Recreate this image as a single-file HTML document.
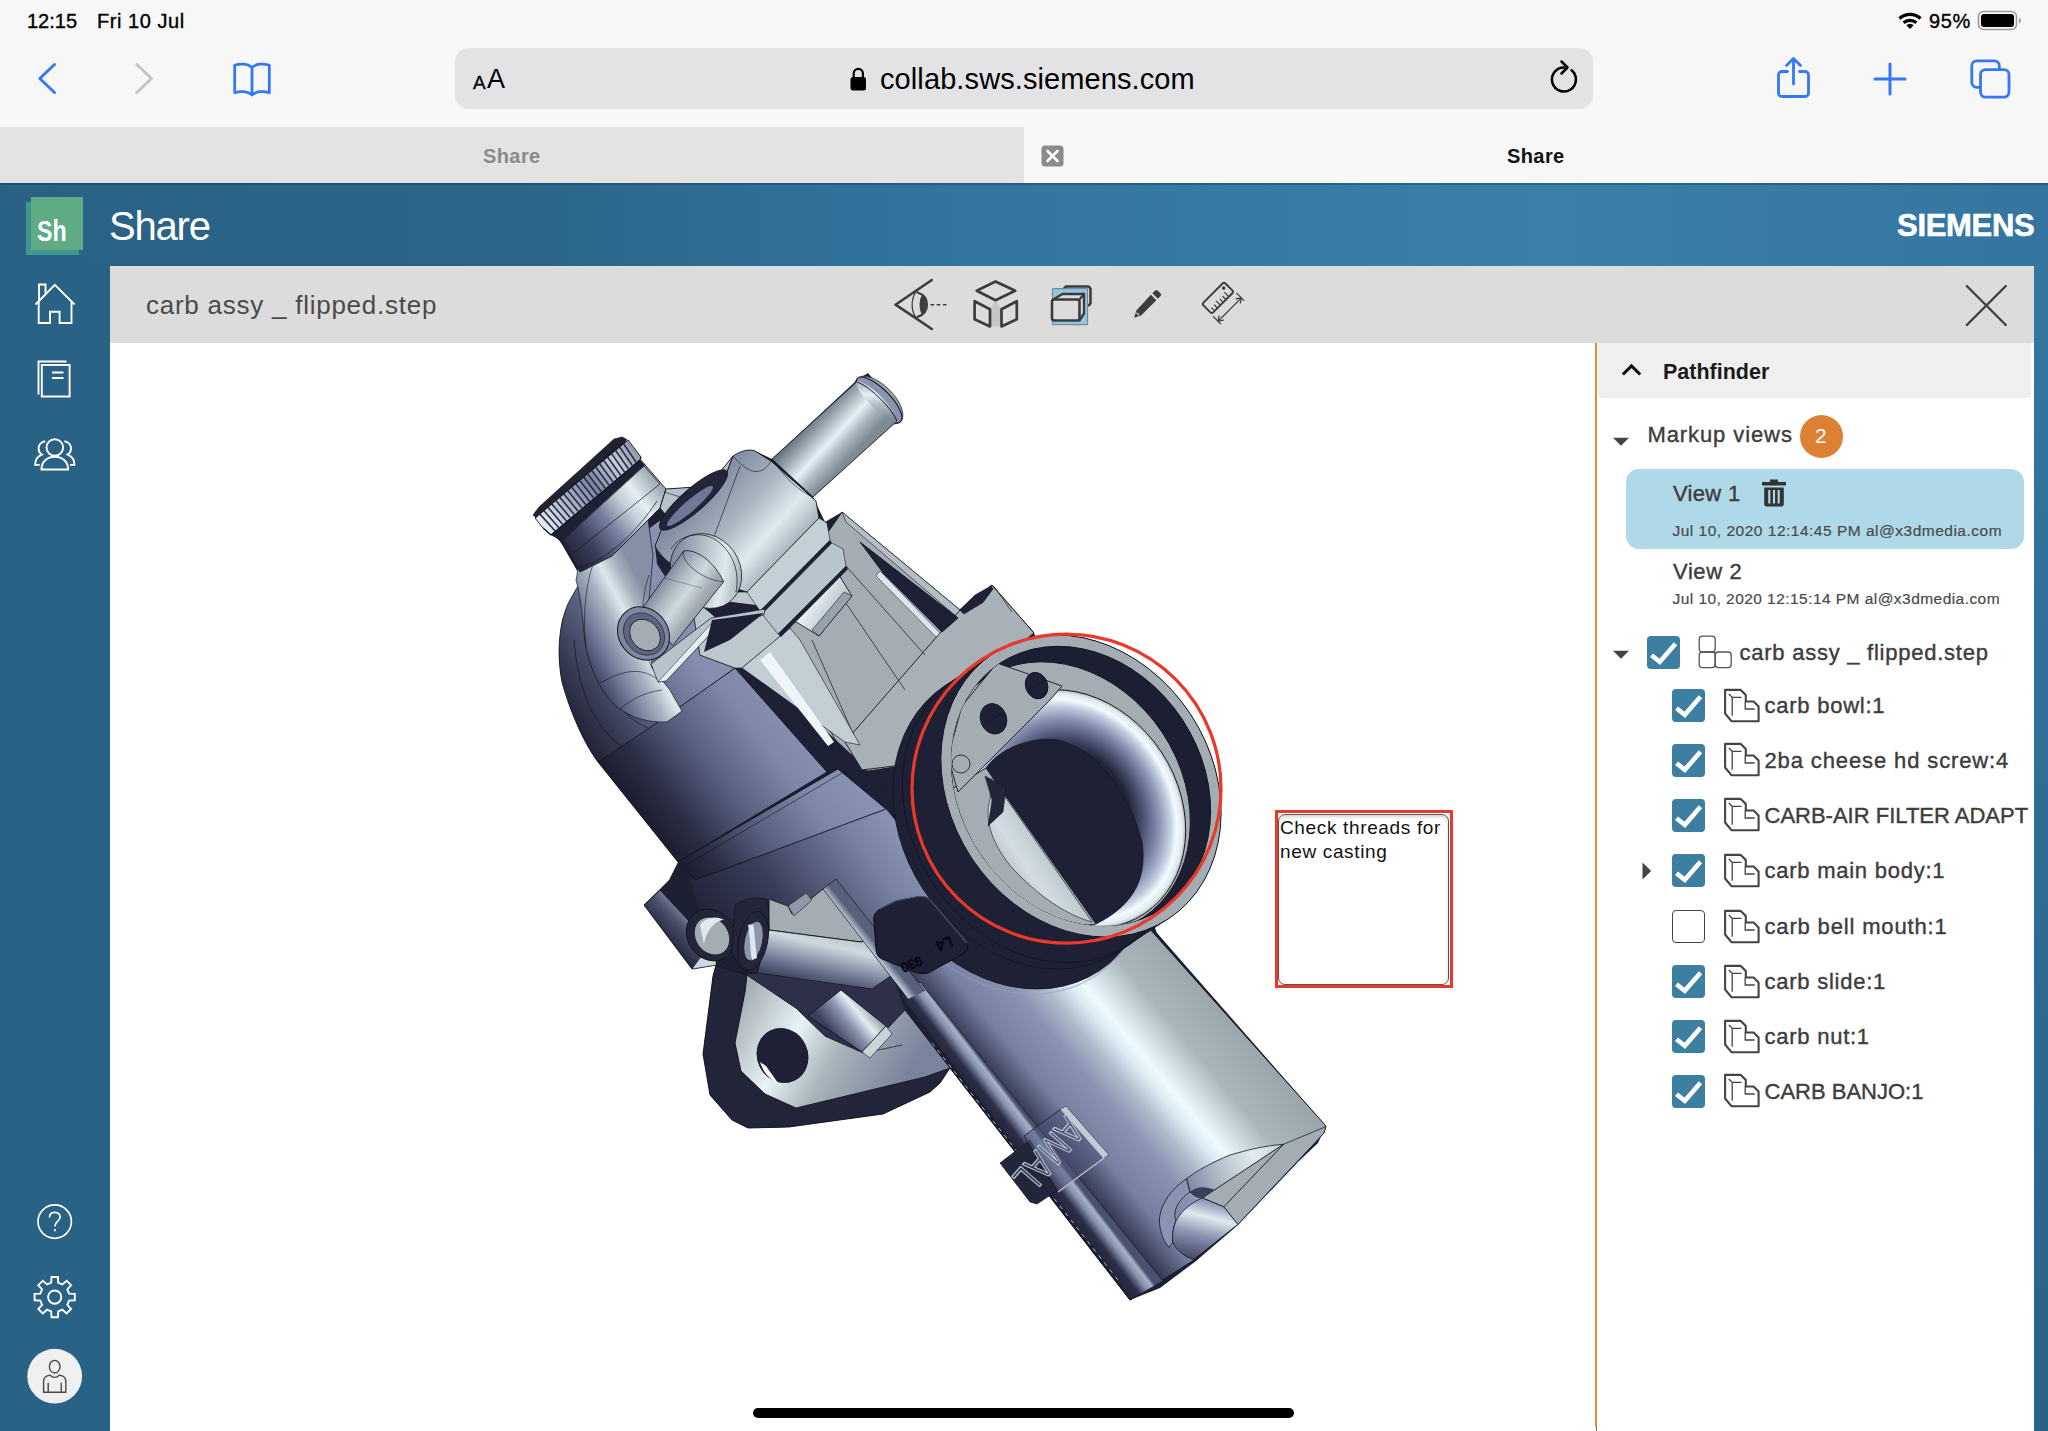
<!DOCTYPE html>
<html lang="en">
<head>
<meta charset="utf-8">
<title>Share</title>
<style>
*{box-sizing:border-box;margin:0;padding:0}
html,body{width:2048px;height:1431px;overflow:hidden;background:#fff}
body{position:relative;font-family:"Liberation Sans",sans-serif;color:#000}
.abs{position:absolute}
.t{position:absolute;white-space:nowrap;line-height:1}
/* safari chrome */
#chrome{left:0;top:0;width:2048px;height:127px;background:#f7f7f7}
#urlbar{left:455px;top:48px;width:1138px;height:61px;border-radius:14px;background:#e3e3e5}
#tabbar{left:0;top:127px;width:2048px;height:57px;background:#f7f7f7}
#tab1{left:0;top:127px;width:1024px;height:56px;background:#e3e3e3}
/* app */
#hdr{left:0;top:183px;width:2048px;height:1248px;background:linear-gradient(90deg,#2a6285 0%,#2b6588 24%,#3377a1 50%,#3a80a9 76%,#3679a3 92%,#33759e 100%)}
#side{left:0;top:265px;width:110px;height:1166px;background:#2a6285}
#rstrip{left:2034px;top:265px;width:14px;height:1166px;background:linear-gradient(180deg,#3377a1,#2a6285)}
#vbar{left:110px;top:266px;width:1924px;height:77px;background:#dcdcdc}
#canvas{left:110px;top:343px;width:1486px;height:1088px;background:#fff}
#panel{left:1597px;top:343px;width:437px;height:1088px;background:#fff}
#oline{left:1595px;top:343px;width:2px;height:1084px;background:#e08b3e}
#pfh{left:1598px;top:343px;width:433px;height:55px;background:#efefef;border-radius:0 0 4px 4px}
.pt{color:#3d3d3d;font-size:22px;letter-spacing:.75px;-webkit-text-stroke:.4px #3d3d3d}
.cb{position:absolute;width:33px;height:33px;border-radius:4px;background:#3d7fa1}
.cb.off{background:#fff;border:1.5px solid #444}
</style>
</head>
<body>
<!-- ===== Safari chrome ===== -->
<div class="abs" id="chrome"></div>
<div class="t" style="left:27px;top:10.5px;font-size:20px;-webkit-text-stroke:.35px #000">12:15</div>
<div class="t" style="left:97px;top:10.5px;font-size:20px;letter-spacing:.55px;-webkit-text-stroke:.35px #000">Fri 10 Jul</div>
<div class="t" style="left:1929px;top:10.5px;font-size:20px;letter-spacing:.6px;-webkit-text-stroke:.35px #000">95%</div>
<div class="abs" id="urlbar"></div>
<svg class="abs" style="left:0;top:0" width="2048" height="184" viewBox="0 0 2048 184" fill="none">
  <!-- wifi -->
  <g id="wifi">
    <path d="M1899.5 18.5a15.5 15.5 0 0 1 21 0" stroke="#000" stroke-width="3.2" stroke-linecap="butt"/>
    <path d="M1903.6 22.8a9.6 9.6 0 0 1 12.8 0" stroke="#000" stroke-width="3.2"/>
    <path d="M1910 29l-3.6-3.7a5 5 0 0 1 7.2 0z" fill="#000"/>
  </g>
  <!-- battery -->
  <rect x="1978.5" y="11.5" width="38" height="18" rx="5" stroke="#9a9a9a" stroke-width="1.6"/>
  <rect x="1981" y="14" width="33" height="13" rx="3" fill="#000"/>
  <path d="M2019 17.5v6a3.3 3.3 0 0 0 0-6z" fill="#9a9a9a"/>
  <!-- back / fwd -->
  <path d="M54.5 64.5L39.8 78.5L54.5 92.5" stroke="#3478f6" stroke-width="3" stroke-linecap="round" stroke-linejoin="round"/>
  <path d="M136.8 64.5L151.5 78.5L136.8 92.5" stroke="#c5c5c7" stroke-width="3" stroke-linecap="round" stroke-linejoin="round"/>
  <!-- book -->
  <path d="M252 67.5c-4-3.5-11-4.5-17.3-2.2v27.5c6.3-2.3 13.3-1.3 17.3 2.2c4-3.500 11-4.500 17.300-2.200v-27.500c-6.300-2.300-13.300-1.300-17.300 2.200zM252 67.500v27.500" stroke="#3478f6" stroke-width="2.8" stroke-linejoin="round"/>
  <!-- lock -->
  <rect x="850.500" y="77" width="15.500" height="13.500" rx="2.500" fill="#000"/>
  <path d="M853.700 78v-4.500a4.600 4.600 0 0 1 9.200 0v4.500" stroke="#000" stroke-width="2.200"/>
  <!-- reload -->
  <path d="M1571.500 70.200a12 12 0 1 1 -7.500 -2.700" stroke="#000" stroke-width="2.500" stroke-linecap="round"/>
  <path d="M1561.500 61.500l6 6l-6 6" stroke="#000" stroke-width="2.500" stroke-linecap="round" stroke-linejoin="round"/>
  <!-- share -->
  <path d="M1787.500 71.500h-5.500a3.500 3.500 0 0 0 -3.500 3.500v18a3.500 3.500 0 0 0 3.500 3.500h23a3.500 3.500 0 0 0 3.500 -3.500v-18a3.500 3.500 0 0 0 -3.500 -3.500h-5.500" stroke="#3478f6" stroke-width="2.800" stroke-linecap="round"/>
  <path d="M1793.500 84v-25M1786.500 65.500l7-7l7 7" stroke="#3478f6" stroke-width="2.800" stroke-linecap="round" stroke-linejoin="round"/>
  <!-- plus -->
  <path d="M1875 79h30M1890 64v30" stroke="#3478f6" stroke-width="3" stroke-linecap="round"/>
  <!-- tabs -->
  <rect x="1971.800" y="60.800" width="27.500" height="26.500" rx="5" stroke="#3478f6" stroke-width="2.800"/>
  <rect x="1980.500" y="69.600" width="28.500" height="27.500" rx="5" fill="#f7f7f7" stroke="#3478f6" stroke-width="2.800"/>
</svg>
<div class="t" style="left:473px;top:73px;font-size:19px;-webkit-text-stroke:.3px #000">A</div>
<div class="t" style="left:487px;top:66px;font-size:27px">A</div>
<div class="t" style="left:880px;top:64.5px;font-size:29px;letter-spacing:.1px">collab.sws.siemens.com</div>
<div class="abs" id="tabbar"></div>
<div class="abs" id="tab1"></div>
<div class="t" style="left:483px;top:146px;font-size:20px;font-weight:bold;color:#8a8a8a;letter-spacing:.4px">Share</div>
<div class="t" style="left:1507px;top:146px;font-size:20px;font-weight:bold;color:#111;letter-spacing:.4px">Share</div>
<svg class="abs" style="left:1041px;top:145px" width="23" height="22" viewBox="0 0 23 22"><rect x=".5" y=".5" width="22" height="21" rx="3.500" fill="#8b8b8b"/><path d="M6.500 6l10 10M16.500 6l-10 10" stroke="#fff" stroke-width="2.600" stroke-linecap="round"/></svg>

<!-- ===== App ===== -->
<div class="abs" id="hdr"></div>
<div class="abs" style="left:0;top:183px;width:2048px;height:2px;background:rgba(20,50,70,.35)"></div>
<div class="abs" id="side"></div>
<div class="abs" id="rstrip"></div>
<!-- logo -->
<div class="abs" style="left:26px;top:202px;width:53px;height:53px;background:#3f9890"></div>
<div class="abs" style="left:31px;top:197px;width:52px;height:53px;background:#5eab84"></div>
<div class="t" style="left:36.5px;top:216.5px;font-size:29px;font-weight:bold;color:#fff;transform:scaleX(.8);transform-origin:0 0">Sh</div>
<div class="t" style="left:109px;top:205.5px;font-size:40px;color:#fff;letter-spacing:-1.200px">Share</div>
<div class="t" style="left:1897px;top:209.5px;font-size:31px;font-weight:bold;color:#fff;letter-spacing:-.3px;-webkit-text-stroke:.6px #fff">SIEMENS</div>

<div class="abs" id="vbar"></div>
<div class="t" style="left:146px;top:291.5px;font-size:26px;color:#4a4a4a;letter-spacing:.75px">carb assy _ flipped.step</div>
<div class="abs" id="canvas"></div>
<div class="abs" id="panel"></div>
<div class="abs" id="oline"></div>
<div class="abs" id="pfh"></div>

<!-- MODEL-START -->
<svg class="abs" style="left:110px;top:343px" width="1486" height="1088" viewBox="110 343 1486 1088">
<defs>
  <!-- main body: across-axis gradient, left(dark) to right(light) -->
  <linearGradient id="gBody" gradientUnits="userSpaceOnUse" x1="928" y1="1040" x2="1117" y2="882">
    <stop offset="0" stop-color="#1d1f33"/><stop offset=".10" stop-color="#30334d"/><stop offset=".24" stop-color="#767f9f"/>
    <stop offset=".40" stop-color="#8a93b2"/><stop offset=".50" stop-color="#aebbcc"/><stop offset=".58" stop-color="#dcebf2"/><stop offset=".63" stop-color="#eefaff"/>
    <stop offset=".70" stop-color="#d2dfe5"/><stop offset=".80" stop-color="#aab6bc"/><stop offset="1" stop-color="#9aa6ac"/>
  </linearGradient>
  <!-- bowl: dark lower-left to blue-grey upper-right -->
  <linearGradient id="gBowl" gradientUnits="userSpaceOnUse" x1="640" y1="815" x2="800" y2="690">
    <stop offset="0" stop-color="#1b1c2e"/><stop offset=".15" stop-color="#2a2c43"/><stop offset=".4" stop-color="#555c7c"/><stop offset=".7" stop-color="#7e87a7"/><stop offset="1" stop-color="#8c95b4"/>
  </linearGradient>
  <linearGradient id="gTube" gradientUnits="userSpaceOnUse" x1="772" y1="459" x2="813" y2="497">
    <stop offset="0" stop-color="#5f6a78"/><stop offset=".25" stop-color="#98a5ae"/><stop offset=".55" stop-color="#e6f1f6"/><stop offset=".75" stop-color="#aebac2"/><stop offset="1" stop-color="#7e8a94"/>
  </linearGradient>
  <linearGradient id="gBanjo" gradientUnits="userSpaceOnUse" x1="690" y1="500" x2="790" y2="590">
    <stop offset="0" stop-color="#7e88a2"/><stop offset=".35" stop-color="#a9b6c0"/><stop offset=".6" stop-color="#dfeaf0"/><stop offset=".8" stop-color="#a8b4bc"/><stop offset="1" stop-color="#8c98a2"/>
  </linearGradient>
  <linearGradient id="gNeck" gradientUnits="userSpaceOnUse" x1="565" y1="548" x2="655" y2="478">
    <stop offset="0" stop-color="#23263a"/><stop offset=".2" stop-color="#3c405c"/><stop offset=".45" stop-color="#7a83a0"/><stop offset=".65" stop-color="#c5d0d8"/><stop offset=".78" stop-color="#e4eef3"/><stop offset="1" stop-color="#9aa6b0"/>
  </linearGradient>
  <linearGradient id="gArm" gradientUnits="userSpaceOnUse" x1="830" y1="925" x2="815" y2="990">
    <stop offset="0" stop-color="#a9b5bd"/><stop offset=".3" stop-color="#cfdae0"/><stop offset=".7" stop-color="#6d7590"/><stop offset="1" stop-color="#2c2f48"/>
  </linearGradient>
  <linearGradient id="gRod" gradientUnits="userSpaceOnUse" x1="880" y1="990" x2="900" y2="974">
    <stop offset="0" stop-color="#252840"/><stop offset=".45" stop-color="#666e8c"/><stop offset=".7" stop-color="#b9c6d2"/><stop offset="1" stop-color="#59607c"/>
  </linearGradient>
  <linearGradient id="gFace" gradientUnits="userSpaceOnUse" x1="740" y1="1000" x2="900" y2="1090">
    <stop offset="0" stop-color="#a3adb3"/><stop offset=".35" stop-color="#e8f3f7"/><stop offset=".6" stop-color="#a9b4bb"/><stop offset="1" stop-color="#7a839c"/>
  </linearGradient>
  <radialGradient id="gBell" gradientUnits="objectBoundingBox" cx=".5" cy=".5" r=".5">
    <stop offset="0" stop-color="#1d1f33"/><stop offset=".5" stop-color="#22253a"/><stop offset=".62" stop-color="#4d5373"/><stop offset=".76" stop-color="#8a93b2"/><stop offset=".86" stop-color="#c2cde0"/><stop offset=".92" stop-color="#f2fbff"/><stop offset=".97" stop-color="#e1ebf0"/><stop offset="1" stop-color="#b0bac0"/>
  </radialGradient>
  <linearGradient id="gDome" gradientUnits="userSpaceOnUse" x1="560" y1="720" x2="720" y2="610">
    <stop offset="0" stop-color="#1b1c2e"/><stop offset=".18" stop-color="#34374f"/><stop offset=".45" stop-color="#5f6786"/><stop offset=".75" stop-color="#858eae"/><stop offset="1" stop-color="#8a93b2"/>
  </linearGradient>

  <linearGradient id="gBowl2" gradientUnits="userSpaceOnUse" x1="720" y1="960" x2="900" y2="830">
    <stop offset="0" stop-color="#1d1f33"/><stop offset=".4" stop-color="#3a3e5a"/><stop offset=".8" stop-color="#767f9f"/><stop offset="1" stop-color="#8a93b2"/>
  </linearGradient>
  <linearGradient id="gElbow" gradientUnits="userSpaceOnUse" x1="580" y1="650" x2="655" y2="610">
    <stop offset="0" stop-color="#3f4360"/><stop offset=".25" stop-color="#737c9a"/><stop offset=".5" stop-color="#a9b4c2"/><stop offset=".68" stop-color="#dde7ed"/><stop offset=".85" stop-color="#a8b3be"/><stop offset="1" stop-color="#8590a6"/>
  </linearGradient>
  <linearGradient id="gSlide" gradientUnits="userSpaceOnUse" x1="785" y1="595" x2="840" y2="630">
    <stop offset="0" stop-color="#8a95a5"/><stop offset=".4" stop-color="#e8f2f6"/><stop offset="1" stop-color="#a3adb3"/>
  </linearGradient>
  <linearGradient id="gFTube" gradientUnits="userSpaceOnUse" x1="652" y1="585" x2="700" y2="620">
    <stop offset="0" stop-color="#6e7890"/><stop offset=".3" stop-color="#a9b5bd"/><stop offset=".55" stop-color="#cfdadf"/><stop offset=".8" stop-color="#a3adb3"/><stop offset="1" stop-color="#8e99a8"/>
  </linearGradient>

  <linearGradient id="gCyl2" gradientUnits="userSpaceOnUse" x1="828" y1="1028" x2="862" y2="1000">
    <stop offset="0" stop-color="#3a3e5a"/><stop offset=".45" stop-color="#8b94ae"/><stop offset=".75" stop-color="#e3edf2"/><stop offset="1" stop-color="#9da8b4"/>
  </linearGradient>
  <linearGradient id="gCyl3" gradientUnits="userSpaceOnUse" x1="665" y1="945" x2="700" y2="912">
    <stop offset="0" stop-color="#1d1f33"/><stop offset=".5" stop-color="#4a4f6b"/><stop offset=".85" stop-color="#8d96b2"/><stop offset="1" stop-color="#5a6180"/>
  </linearGradient>
  <linearGradient id="gSweep" gradientUnits="userSpaceOnUse" x1="985" y1="870" x2="1045" y2="830">
    <stop offset="0" stop-color="#a3adb3"/><stop offset=".5" stop-color="#d3dde3"/><stop offset="1" stop-color="#b4bfc6"/>
  </linearGradient>
  <linearGradient id="gBl1" gradientUnits="userSpaceOnUse" x1="1188" y1="1188" x2="1283" y2="1144">
    <stop offset="0" stop-color="#7d87a3"/><stop offset=".35" stop-color="#b4c0ca"/><stop offset=".7" stop-color="#e2ecf1"/><stop offset="1" stop-color="#c5d0d6"/>
  </linearGradient>
  <linearGradient id="gBl2" gradientUnits="userSpaceOnUse" x1="1205" y1="1200" x2="1190" y2="1262">
    <stop offset="0" stop-color="#8a93b0"/><stop offset=".25" stop-color="#dfe9ee"/><stop offset=".55" stop-color="#8a93b0"/><stop offset="1" stop-color="#3a3e5a"/>
  </linearGradient>
  <linearGradient id="gRod2" gradientUnits="userSpaceOnUse" x1="1010" y1="1150" x2="1036" y2="1130">
    <stop offset="0" stop-color="#1c1e32"/><stop offset=".45" stop-color="#2c2f48"/><stop offset=".72" stop-color="#8891ae"/><stop offset=".9" stop-color="#a7b1c6"/><stop offset="1" stop-color="#4a5070"/>
  </linearGradient>
  <linearGradient id="gBoss" gradientUnits="userSpaceOnUse" x1="680" y1="545" x2="735" y2="600">
    <stop offset="0" stop-color="#7d87a3"/><stop offset=".4" stop-color="#b4c0c9"/><stop offset=".7" stop-color="#dfe9ee"/><stop offset="1" stop-color="#9aa6b0"/>
  </linearGradient>
  <linearGradient id="gKnob" gradientUnits="userSpaceOnUse" x1="540" y1="525" x2="636" y2="450">
    <stop offset="0" stop-color="#e8f0f5"/><stop offset=".3" stop-color="#aab3c8"/><stop offset=".55" stop-color="#7a84a4"/><stop offset=".8" stop-color="#c5cedb"/><stop offset="1" stop-color="#8e97ab"/>
  </linearGradient>
</defs>
<g stroke="#14151f" stroke-width=".9" stroke-linejoin="round">
<!-- base silhouette fill -->
<path d="M534 515L622 437L641 458L637 470L665 489L696 487L716 477L733 456L755 451L772 459L857 380L868 373L902 413L899 419L813 497L825 522L842 512L960 610L992 585L1034 633L1157 933L1326 1126L1318 1143L1298 1162L1238 1225L1196 1261L1160 1288L1130 1300L950 1068L940 1083L930 1092L883 1114L789 1127L748 1128L732 1120L710 1095L703 1054L713 976L716 965L692 969L644 905L669 880L678 862L598 762L571 710L559 659L562 620L575 595L583 581L560 541Z" fill="#1d1f33" stroke="none"/>
<!-- p_body -->
<path d="M880 978L1080 851L1326 1126L1324 1133L1299 1159L1238 1224L1194 1260L1158 1283L1130 1300Z" fill="url(#gBody)"/>
<path d="M880 978L902 964L1150 1289L1130 1300Z" fill="#1d1f33" stroke="none" opacity=".8"/>
<path d="M900 996L920 982L1163 1281L1130 1300Z" fill="url(#gRod2)" stroke-width=".7"/>
<path d="M932 1043L1118 1280" stroke="#c3cbd8" stroke-width=".9" stroke-dasharray="4 5" fill="none"/>
<path d="M1283.500 1144.300L1325.800 1126.700L1324 1133L1299.400 1159.300L1237.800 1224.400L1223.700 1206.800Z" fill="#a3adb3" stroke-width=".7"/>
<path d="M1186.700 1178.600C1170 1190 1160 1205 1159.400 1221C1160 1235 1165 1243 1169 1247.300L1173 1242C1172 1232 1174 1225 1176 1221C1172 1212 1178 1200 1190 1192Z" fill="#8a93b0" stroke-width=".8"/>
<path d="M1283.500 1144.300C1262 1146 1246.600 1150.400 1230 1155C1211.300 1162.800 1198 1170 1186.700 1178.600L1190 1192C1194 1196 1198 1198 1202.500 1198Z" fill="url(#gBl1)" stroke-width=".8"/>
<path d="M1190 1192C1194 1196 1198 1198 1202.500 1198L1215 1190C1205 1186 1196 1186 1190 1192Z" fill="#3a3e5a" stroke="none"/>
<path d="M1283.500 1144.300L1223.700 1206.800L1202.500 1198Z" fill="#a3adb3" stroke-width=".7"/>
<path d="M1202.500 1198L1223.700 1206.800L1237.800 1224.400L1193.700 1259.600C1185 1257 1176 1250 1172.600 1242C1172 1232 1174 1226 1176 1221C1182 1210 1192 1202 1202.500 1198Z" fill="url(#gBl2)" stroke-width=".8"/>
<path d="M1000 1163L1030 1140L1058 1190L1037 1204L1030 1202Z" fill="#23263a" stroke-width=".7"/>
<path d="M1024 1136L1061 1109L1104 1158L1058 1192Z" fill="#50567a" fill-opacity=".55" stroke-width=".8"/>
<path d="M1061 1109L1066 1106L1109 1155L1104 1158Z" fill="#c2ccd6" stroke-width=".5"/>
<path d="M1061 1109L1104 1158L1058 1192" fill="none" stroke="#c2ccd6" stroke-width="1.2"/>
<text x="0" y="0" transform="translate(1066 1114) rotate(131)" font-family="Liberation Sans, sans-serif" font-size="40" fill="#4a5070" fill-opacity=".5" stroke="#c5cfda" stroke-width="1.1" textLength="84" lengthAdjust="spacingAndGlyphs">AMAL</text>
<!-- p_bowl -->
<path d="M690 880L886 809L960 900L930 960L820 900L760 935L716 965Z" fill="url(#gBowl2)" stroke="none"/>
<path d="M598 762L735 668L827 772L678 862Z" fill="url(#gBowl)"/>
<path d="M678 862L838 769L886 809L695 880Z" fill="url(#gBowl)"/>
<path d="M681 868L842 773" stroke-width=".6" fill="none"/>
<path d="M598 762C585 745 570 712 562 682C556 650 560 622 568 604C574 592 580 584 583 576L660 520L735 668C690 700 640 735 598 762Z" fill="url(#gDome)"/>
<path d="M574 640C578 690 595 730 622 746M590 610C590 665 610 712 648 728" fill="none" stroke-width=".7"/>
<path d="M566 548C575 560 580 566 576 580C582 600 583 630 586 648C592 675 604 698 620 709C632 718 650 723 667 722L682 711L670 690L652 668L649 600L653 556L640 459Z" fill="url(#gElbow)" stroke-width=".7"/>
<path d="M593 564C584 590 583 625 586 648M649 575C640 600 640 640 652 668M600 683C620 672 640 665 658 680M620 709C630 700 645 692 662 690" fill="none" stroke-width=".6"/>
<!-- p_upper -->
<path d="M690 592L747 592L768 600L795 580L842 512L960 610L992 585L1034 633L1010 655L912 765L862 772L850 770L836 768L735 668L700 655Z" fill="#a3adb3"/>
<path d="M735 668L750 661L862 764L890 800L886 809L838 768L827 772Z" fill="#1e2035" stroke="none"/>
<path d="M842 512L960 610L957 617L846 522Z" fill="#b4bec4" stroke-width=".6"/>
<path d="M960 610L992 585L1034 633L1012 650L910 764L862 770L845 742Z" fill="#a7b1b7"/>
<path d="M992 585L998 592L1012 612" fill="none" stroke-width=".6"/>
<path d="M1012 650L910 764L862 772L900 800L950 740Z" fill="#1e2035" stroke="none"/>
<path d="M860 542L958 618L942 632L884 574Z" fill="#1e2035"/>
<path d="M880 571L940 633L936 637L876 576Z" fill="#dce6ec" stroke-width=".5"/>
<path d="M846 566L925 655M833 584L905 690M812 640L858 745M775 630L842 752" fill="none" stroke-width=".7"/>
<path d="M789 575L822 548L852 596L819 636L780 612Z" fill="url(#gSlide)"/>
<path d="M852 596L819 636L812 630L844 592Z" fill="#97a2ae" stroke-width=".6"/>
<path d="M690 592L747 592L768 600L790 628L742 668L735 668L700 655Z" fill="#bcc7ce" stroke-width=".6"/>
<path d="M704 608L716 600L765 606L763 614L716 618Z" fill="#1e2035" stroke="none"/>
<path d="M742 668L790 628L800 640L860 745L845 742Z" fill="#c3ced4" stroke-width=".6"/>
<path d="M760 660L770 652L834 742L828 746Z" fill="#eef6fa" stroke="none"/>
<!-- clamp hole --><path d="M959.600 610L975 595L991 586L993 589L983 602.500L964 614Z" fill="#1e2035" stroke-width=".6"/>
<!-- p_banjo -->
<path d="M556 536L640 459L666 489L660 508L612 556L580 572L566 548Z" fill="url(#gNeck)"/>
<path d="M551 535L640 460L645 465L561 541Z" fill="#1e2035" stroke="none"/>
<path d="M562 541L644 466L660 484L573.500 553Z" fill="url(#gNeck)" stroke-width=".7"/>
<path d="M579 567C600 565 635 535 657 501" fill="none" stroke-width=".7"/>
<path d="M660 508L666 489L696 487L716 477L733 456L727 472L662 528L656 546L672 545L670 520Z" fill="#b6c2ca"/>
<path d="M664 492L690 500L672 545M690 500L716 478" fill="none" stroke-width=".6"/>
<path d="M535 518L628 440L641 457L640 460L551 535L543 528Z" fill="url(#gKnob)"/>
<path d="M540.0 514.1L554.9 530.7M543.9 510.7L558.7 527.5M547.9 507.3L562.6 524.2M551.8 503.9L566.5 521.0M555.8 500.5L570.3 517.7M559.7 497.2L574.2 514.4M563.7 493.8L578.1 511.2M567.7 490.4L582.0 507.9M571.6 487.0L585.8 504.7M575.6 483.6L589.7 501.4M579.5 480.2L593.6 498.1M583.5 476.8L597.4 494.9M587.4 473.4L601.3 491.6M591.4 470.0L605.2 488.3M595.3 466.6L609.0 485.1M599.3 463.2L612.9 481.8M603.3 459.8L616.8 478.6M607.2 456.5L620.7 475.3M611.2 453.1L624.5 472.0M615.1 449.7L628.4 468.8M619.1 446.3L632.3 465.5M623.0 442.9L636.1 462.3" stroke="#2a2d40" stroke-width="1.6" fill="none"/>
<path d="M533 515L539 507L614 439L622 437L627 439.500L536 517.500Z" fill="#20222f" stroke-width=".6"/>
<path d="M543 528L551 535L640 460L641 457" fill="none" stroke-width="1.1"/>
<path d="M733 456C742 450 750 449 755 451L771 461L816 501L819 518L747 592L700 578C680 572 662 560 655 546L662 528L727 472Z" fill="url(#gBanjo)"/>
<path d="M655 546C662 560 680 572 700 578L694 590L670 584L657 564Z" fill="#1e2035" stroke="none"/>
<ellipse cx="693.5" cy="500.0" rx="44.0" ry="11.5" transform="rotate(-41 693.5 500.0)" fill="#23263a" />
<ellipse cx="690.0" cy="506.0" rx="30.0" ry="5.5" transform="rotate(-41 690.0 506.0)" fill="#6f7896" stroke="none"/>
<path d="M747 592L819 518L827 523L830 540L760 611Z" fill="#c4cfd6" stroke-width=".6"/>
<path d="M760 611L830 540L832 543L762 614Z" fill="#1e2035" stroke="none"/>
<path d="M762 614L832 543L843 549L846 566L778 634Z" fill="#b9c5cc" stroke-width=".6"/>
<path d="M778 634L846 566L848 569L781 637Z" fill="#1e2035" stroke="none"/>
<path d="M733 456C745 470 760 480 771 461M740 466L700 575" fill="none" stroke-width=".6"/>
<ellipse cx="879.0" cy="400.0" rx="30.5" ry="14.5" transform="rotate(45 879.0 400.0)" fill="#98a3ae" stroke-width=".7"/>
<ellipse cx="879.0" cy="400.0" rx="30.5" ry="11.0" transform="rotate(45 879.0 400.0)" fill="#8a92ae" stroke-width="1.1"/>
<path d="M772 459L856.500 382L897 421L813 497Z" fill="url(#gTube)" stroke-width=".8"/>
<ellipse cx="876.7" cy="401.5" rx="28.2" ry="6.5" transform="rotate(45 876.7 401.5)" fill="url(#gTube)" stroke="none"/>
<path d="M856.500 382C866 384 890 405 897 421" fill="none" stroke-width="1"/>
<path d="M772 459C785 478 800 492 813 497" fill="none" stroke-width=".6"/>
<!-- p_ring -->
<!-- lip --><clipPath id="cLip"><path d="M900 905L1010 880L1175 880L1175 1020L900 1020Z"/></clipPath><g clip-path="url(#cLip)"><ellipse cx="1012" cy="838" rx="159" ry="131" transform="rotate(56.5 1012 838)" fill="#1e2035" stroke-width=".7"/><ellipse cx="1008" cy="843" rx="159" ry="131" transform="rotate(56.5 1008 843)" fill="none" stroke="#9aa4be" stroke-width="1.3" opacity=".6"/></g>
<ellipse cx="1033.0" cy="818.0" rx="159.0" ry="131.0" transform="rotate(56.5 1033.0 818.0)" fill="#1e2035" stroke="none"/>
<ellipse cx="1037.8" cy="814.8" rx="159.0" ry="131.0" transform="rotate(56.5 1037.8 814.8)" fill="#1e2035" stroke="none"/>
<ellipse cx="1042.6" cy="811.6" rx="159.0" ry="131.0" transform="rotate(56.5 1042.6 811.6)" fill="#1e2035" stroke="none"/>
<ellipse cx="1047.4" cy="808.4" rx="159.0" ry="131.0" transform="rotate(56.5 1047.4 808.4)" fill="#1e2035" stroke="none"/>
<ellipse cx="1052.2" cy="805.2" rx="159.0" ry="131.0" transform="rotate(56.5 1052.2 805.2)" fill="#1e2035" stroke="none"/>
<ellipse cx="1057.0" cy="802.0" rx="159.0" ry="131.0" transform="rotate(56.5 1057.0 802.0)" fill="#1e2035" stroke="none"/>
<ellipse cx="1061.8" cy="798.8" rx="159.0" ry="131.0" transform="rotate(56.5 1061.8 798.8)" fill="#1e2035" stroke="none"/>
<ellipse cx="1066.6" cy="795.6" rx="159.0" ry="131.0" transform="rotate(56.5 1066.6 795.6)" fill="#1e2035" stroke="none"/>
<ellipse cx="1071.4" cy="792.4" rx="159.0" ry="131.0" transform="rotate(56.5 1071.4 792.4)" fill="#1e2035" stroke="none"/>
<ellipse cx="1076.2" cy="789.2" rx="159.0" ry="131.0" transform="rotate(56.5 1076.2 789.2)" fill="#1e2035" stroke="none"/>
<ellipse cx="1081.0" cy="786.0" rx="159.0" ry="131.0" transform="rotate(56.5 1081.0 786.0)" fill="#1e2035" stroke="none"/>
<ellipse cx="1033.0" cy="818.0" rx="159.0" ry="131.0" transform="rotate(56.5 1033.0 818.0)" fill="none" stroke-width=".8"/>
<ellipse cx="1042.6" cy="811.6" rx="159.0" ry="131.0" transform="rotate(56.5 1042.6 811.6)" fill="none" stroke-width=".6" stroke="#0d0e18"/>
<ellipse cx="1081.0" cy="786.0" rx="159.0" ry="131.0" transform="rotate(56.5 1081.0 786.0)" fill="#a3adb3" />
<clipPath id="cE2"><ellipse cx="1081" cy="786" rx="147.1" ry="121.2" transform="rotate(56.5 1081 786)"/></clipPath>
<ellipse cx="1081.0" cy="786.0" rx="147.1" ry="121.2" transform="rotate(56.5 1081.0 786.0)" fill="#1c1e32" />
<g clip-path="url(#cE2)">
<ellipse cx="1064.0" cy="798.0" rx="143.4" ry="118.1" transform="rotate(56.5 1064.0 798.0)" fill="#a3adb3" />
<ellipse cx="1075.0" cy="809.0" rx="125.6" ry="103.5" transform="rotate(56.5 1075.0 809.0)" fill="url(#gBell)" />
<path d="M986 768C1000 748 1032 736 1058 740C1098 750 1130 794 1142 842C1147 876 1136 904 1096 924Z" fill="#1e2035" stroke-width=".7"/>
<path d="M950 790L986 768L1096 924C1060 930 1000 900 962 845Z" fill="#a3adb3"/>
<path d="M990 800C984 820 992 845 1014 870C1038 895 1066 915 1092 922L992 778Z" fill="url(#gSweep)" stroke-width=".6"/>
<path d="M985 776L1006 788L1003 812L988 826L992 800Z" fill="#23263a" stroke-width=".5"/>
<path d="M997 663L1062 686L1050 700L958 792L948 757L962 706Z" fill="#a3adb3"/>
<ellipse cx="1036.6" cy="685.6" rx="11.0" ry="13.5" transform="rotate(-20 1036.6 685.6)" fill="#1e2035" />
<ellipse cx="993.5" cy="718.8" rx="13.0" ry="15.5" transform="rotate(-20 993.5 718.8)" fill="#1e2035" />
<path d="M1028 690L1046 680M984 724L1004 713" stroke-width=".7"/>
<circle cx="961" cy="764" r="9" fill="#a3adb3" stroke-width=".8"/>
</g>
<!-- p_flange -->
<path d="M716 965L713 976L703 1054L710 1095L732 1120L748 1128L789 1127L883 1114L930 1092L940 1083L950 1068L925 1060L796 1100L765 1094L741 1071L735 1043L745 992L747 975Z" fill="#222439"/>
<path d="M747 975L745 992L735 1043L741 1071L765 1094L796 1108L925 1077L950 1068L905 1010L864 1053L825 1036L796 1008Z" fill="url(#gFace)"/>
<path d="M747 975L796 1008L825 1036L864 1053L902 1045" fill="none" stroke-width=".7"/>
<ellipse cx="782.5" cy="1055.5" rx="25.0" ry="27.5" transform="rotate(-25 782.5 1055.5)" fill="#1e2035" />
<path d="M760 1062C763 1072 770 1080 778 1083L766 1066Z" fill="#fff" stroke="none"/>
<path d="M769 899L788 906L792 914L823 889L872 938L861 942L769 930Z" fill="#a3adb3"/>
<path d="M788 906L806 893L812 900L794 916Z" fill="#8f99a6" stroke-width=".6"/>
<path d="M769 930L861 942L872 938L892 975L872 989L757 973Z" fill="url(#gArm)"/>
<path d="M808 1016L841 990L886 1026L862 1052Z" fill="url(#gCyl2)"/>
<path d="M757 973L872 989L892 975L905 1010L864 1053L825 1036L796 1008L747 975Z" fill="#3a3e5a" stroke="none" opacity=".55"/>
<path d="M808 1016L841 990L886 1026L862 1052Z" fill="url(#gCyl2)"/>
<path d="M862 1052L886 1026L892 1034L870 1058Z" fill="#c9d4da" stroke-width=".6"/>
<path d="M644 905L660 890L716 950L716 965L692 969Z" fill="url(#gCyl3)"/>
<path d="M692 969L716 965L716 950L700 958Z" fill="#cfd9df" stroke-width=".5"/>
<ellipse cx="711.0" cy="935.0" rx="23.5" ry="27.0" transform="rotate(-35 711.0 935.0)" fill="#23263a" />
<ellipse cx="712.0" cy="936.0" rx="16.5" ry="20.0" transform="rotate(-35 712.0 936.0)" fill="#a3adb3" stroke-width=".7"/>
<path d="M700 925C705 918 715 915 724 920C716 920 706 930 704 945Z" fill="#dfe8ed" stroke="none"/>
<path d="M735 905C745 898 758 896 768 900L769 930L757 973C745 975 735 965 732 950Z" fill="#23263a"/>
<ellipse cx="753.0" cy="941.0" rx="14.5" ry="30.0" transform="rotate(12 753.0 941.0)" fill="#23263a" />
<ellipse cx="753.5" cy="941.0" rx="9.0" ry="20.0" transform="rotate(12 753.5 941.0)" fill="#8d97ab" stroke-width=".7"/>
<path d="M748 925C750 935 750 950 752 960L757 958C755 945 755 932 753 924Z" fill="#dfe8ed" stroke="none"/>
<path d="M823 889L836 879L925 991L908 999Z" fill="url(#gRod)" stroke="none"/>
<path d="M823 889L836 879M836 879L925 991M823 889L908 999" fill="none" stroke-width=".7"/>
<path d="M874 922Q872 914 880 909L896 901L919 896.500Q927 896 931 901L967 943Q970 949 963 954L928 973Q920 975 912 971L882 959Q876 956 876 949Z" fill="#1e2035" stroke="#0a0b12" stroke-width="1"/>
<path d="M880 909L896 901L919 896.500Q927 896 931 901L967 943" fill="none" stroke="#4a4f6e" stroke-width="1.2"/>
<text transform="translate(920 956) rotate(158)" font-family="Liberation Sans, sans-serif" font-size="13" fill="none" stroke="#05060c" stroke-width=".9">930</text>
<text transform="translate(950 936) rotate(158)" font-family="Liberation Sans, sans-serif" font-size="15" fill="none" stroke="#05060c" stroke-width=".9">L4</text>
<!-- p_front -->
<ellipse cx="706.0" cy="571.0" rx="34.0" ry="39.0" transform="rotate(-35 706.0 571.0)" fill="url(#gBoss)" stroke-width=".7"/>
<path d="M671 549C680 535 700 530 716 540C733 552 740 572 736 592" fill="none" stroke-width=".7"/>
<path d="M651 664L711 618L765 609L764 615L716 628L666 681L658 682Z" fill="#b7c2ca" stroke-width=".7"/>
<path d="M658 682L666 681L716 628L711 624Z" fill="#e3edf2" stroke-width=".5"/>
<path d="M712 620L764 613L730 640L704 652Z" fill="#1e2035" stroke="none"/>
<path d="M641.800 609L683.600 551C695 548 715 562 723.600 581.800L672.700 645.500Z" fill="url(#gFTube)" stroke-width=".8"/>
<path d="M683.600 551C680 560 700 580 723.600 581.800" fill="none" stroke-width=".6"/>
<path d="M664 578L702 588" fill="none" stroke-width=".5" opacity=".6"/>
<ellipse cx="643.5" cy="633.5" rx="24.5" ry="28.0" transform="rotate(-40 643.5 633.5)" fill="#7d87a0" stroke-width="1"/>
<ellipse cx="644.0" cy="634.0" rx="19.0" ry="22.5" transform="rotate(-40 644.0 634.0)" fill="#5d6580" stroke-width=".6"/>
<ellipse cx="645.0" cy="635.0" rx="14.0" ry="17.0" transform="rotate(-40 645.0 635.0)" fill="#a3adb3" stroke-width=".8"/>
</g>
</svg>
<svg class="abs" style="left:900px;top:620px" width="340" height="340" viewBox="900 620 340 340"><circle cx="1066.500" cy="788.700" r="154.500" fill="none" stroke="#e8392a" stroke-width="3.200"/></svg>
<div class="abs" style="left:1274.500px;top:810px;width:178.500px;height:178px;border:3.500px solid #e8392a"></div>
<div class="abs" style="left:1278px;top:813.500px;width:171px;height:171.500px;border:1.300px solid #555;border-radius:7px;background:#fff;box-shadow:inset 0 2px 3px rgba(0,0,0,.18)"></div>
<div class="t" style="left:1280px;top:815.8px;font-size:19px;letter-spacing:.65px;line-height:24.500px;color:#111;white-space:pre">Check threads for
new casting</div>

<!-- MODEL-END -->

<!-- ICONS-START -->
<svg class="abs" style="left:880px;top:266px" width="1154" height="77" viewBox="880 266 1154 77" fill="none" stroke="#3c3c3c" stroke-linecap="round" stroke-linejoin="round">
  <!-- eye -->
  <path d="M931.800 280L895.500 304.700L931.800 329" stroke-width="2.600"/>
  <path d="M915.500 292.500c-4.500 7.500-4.500 17 0 24.500" stroke-width="1.300"/>
  <path d="M917.500 292.500c6 2 9.500 6.500 9.500 12.200s-3.500 10.200-9.500 12.200" stroke-width="2.200"/>
  <ellipse cx="922.800" cy="304.700" rx="3.200" ry="9.500" fill="#3c3c3c" stroke="none"/>
  <path d="M930.500 304.700H946.500" stroke-width="1.600" stroke-dasharray="3.600 2.600" stroke-linecap="butt"/>
  <!-- cubes -->
  <path d="M990 309l5.500-8.500l6 8.500v17.500h-11.500z" fill="#c6c6c6" stroke="none"/>
  <path d="M995.500 281.500L1015.200 290.800L995.500 300.200L976.700 290.800Z" stroke-width="2.700"/>
  <path d="M974.600 301.200L990 309.200V326.500L974.600 319.300Z" stroke-width="2.700"/>
  <path d="M1016.800 301.200L1001.500 309.200V326.500L1016.800 319.300Z" stroke-width="2.700"/>
  <!-- box -->
  <rect x="1064" y="286.500" width="26.500" height="19" rx="3" stroke-width="2.600"/>
  <rect x="1052.800" y="288.700" width="34.800" height="36" fill="#93c6e4" stroke="#6b7f8c" stroke-width="1"/>
  <path d="M1053 299.500L1062.500 294H1084V313.500L1079.500 320.500" fill="#dcdcdc" stroke-width="2.400"/>
  <rect x="1052" y="299.500" width="27.500" height="21" rx="2.500" fill="#dcdcdc" stroke-width="2.600"/>
  <path d="M1079.500 299.500L1084 294" stroke-width="2.200"/>
  <!-- pencil -->
  <path d="M1152.300 293.300l2.800-2.800a1.800 1.800 0 0 1 2.500 0l3 3a1.800 1.800 0 0 1 0 2.500l-2.800 2.800z" fill="#3c3c3c" stroke="none"/>
  <path d="M1150.800 294.800l5.500 5.500l-15.200 15.200l-7 2.300l2.300-7.200z" fill="#3c3c3c" stroke="none"/>
  <path d="M1136.800 313l2.200 2.200" stroke="#dcdcdc" stroke-width="1.100"/>
  <!-- ruler -->
  <g transform="rotate(-45 1217.900 297.900)">
    <rect x="1202.400" y="291" width="31" height="13.800" rx="2" stroke-width="1.900"/>
    <path d="M1206.500 304.500v-4M1210.500 304.500v-4M1214.500 304.500v-5.500M1218.500 304.500v-4M1222.500 304.500v-4M1226.500 304.500v-5.500" stroke-width="1.200"/>
    <circle cx="1229" cy="295" r="1.700" fill="#3c3c3c" stroke="none"/>
    <path d="M1201.500 314.500H1234.500M1201.500 308v10M1234.500 308v10" stroke-width="1.200"/>
    <path d="M1206 311.500l-4.500 3l4.500 3M1230 311.500l4.500 3l-4.500 3" stroke-width="1.200"/>
  </g>
  <!-- close -->
  <path d="M1966.800 286L2005.800 325M2005.800 286L1966.800 325" stroke="#404040" stroke-width="2.400" stroke-linecap="round"/>
</svg>

<svg class="abs" style="left:0;top:265px" width="110" height="1166" viewBox="0 265 110 1166" fill="none" stroke="#fff" stroke-width="1.9" stroke-linejoin="miter">
  <!-- home -->
  <path d="M35.5 304.500L54.800 284.800L74.500 304.500"/>
  <path d="M38.700 301.500V323H50V311.800H59.600V323H71.500V301.500"/>
  <path d="M39 300.500V284.500H45.500V293.500"/>
  <!-- docs -->
  <path d="M38.500 394.500V361.500H66.500"/>
  <rect x="41.800" y="365" width="27.800" height="31.500"/>
  <path d="M52 372.500H63.500M52 378H63.500"/>
  <!-- people -->
  <circle cx="54.800" cy="447.500" r="8.300"/>
  <path d="M41.500 469.500c0-7.500 5.500-12.800 13.300-12.800s13.300 5.300 13.300 12.800z"/>
  <path d="M45.200 441.200c-4.200.6-6.600 3.800-6.600 7.300c0 2.600 1.300 4.800 3.300 6.100c-4.200 1.500-6.700 5.300-6.700 10.300h4.500"/>
  <path d="M64.400 441.200c4.200.6 6.600 3.800 6.600 7.300c0 2.600-1.300 4.800-3.300 6.100c4.200 1.500 6.700 5.300 6.700 10.300h-4.500"/>
  <!-- help -->
  <circle cx="54.700" cy="1221.600" r="16.700" stroke-width="1.700"/>
  <path d="M49.500 1217.500c0-3.200 2.200-5.200 5.300-5.200s5.300 2 5.300 4.800c0 4-5.200 4.400-5.200 9.400" stroke-width="1.700"/>
  <path d="M54.900 1229v2.300" stroke-width="1.700"/>
  <!-- gear -->
  <path d="M51.5 1277.0L57.9 1277.0L58.2 1282.7L62.4 1284.5L66.6 1280.7L71.1 1285.2L67.3 1289.4L69.1 1293.6L74.8 1293.9L74.8 1300.3L69.1 1300.6L67.3 1304.8L71.1 1309.0L66.6 1313.5L62.4 1309.7L58.2 1311.5L57.9 1317.2L51.5 1317.2L51.2 1311.5L47.0 1309.7L42.8 1313.5L38.3 1309.0L42.1 1304.8L40.3 1300.6L34.6 1300.3L34.6 1293.9L40.3 1293.6L42.1 1289.4L38.3 1285.2L42.8 1280.7L47.0 1284.5L51.2 1282.7Z" stroke-width="1.900"/>
  <circle cx="54.700" cy="1297.100" r="6.600" stroke-width="1.900"/>
  <!-- avatar -->
  <circle cx="54.700" cy="1376.200" r="27.400" fill="#efefef" stroke="none"/>
  <ellipse cx="54.700" cy="1366.700" rx="5.300" ry="6.300" stroke="#4a4a4a" stroke-width="1.400"/>
  <path d="M43.600 1392.300v-11c0-3.400 2.600-5.600 6.400-6.200c1.300 1.600 2.800 2.300 4.700 2.300s3.400-.7 4.700-2.300c3.800.6 6.400 2.800 6.400 6.200v11zM48.200 1392.300v-9.500M61.200 1392.300v-9.500" stroke="#4a4a4a" stroke-width="1.400"/>
</svg>

<!-- ICONS-END -->

<!-- PANEL-START -->
<div class="abs" style="left:1597px;top:343px;width:432px;height:1088px;overflow:hidden"><div class="abs" style="left:-1597px;top:-343px;width:2048px;height:1431px">
<svg class="abs" style="left:1618px;top:360px" width="28" height="20" viewBox="1618 360 28 20"><path d="M1622.800 374.500L1631.500 366L1640.200 374.500" fill="none" stroke="#111" stroke-width="3.100"/></svg>
<div class="t" style="left:1663px;top:362px;font-size:21.5px;font-weight:bold;color:#1a1a1a">Pathfinder</div>
<svg class="abs" style="left:1612px;top:436px" width="18" height="11" viewBox="0 0 18 11"><path d="M1 1.800H17L9 9.700Z" fill="#444"/></svg>
<div class="t pt" style="left:1647.500px;top:424.4px;letter-spacing:.9px">Markup views</div>
<div class="abs" style="left:1799.500px;top:414.500px;width:43px;height:43px;border-radius:50%;background:#dc8033"></div>
<div class="t" style="left:1815px;top:425px;font-size:21px;color:#fff">2</div>
<div class="abs" style="left:1626px;top:468.500px;width:398px;height:80.500px;border-radius:13px;background:#afd9e8"></div>
<div class="t pt" style="left:1673px;top:483.3px;letter-spacing:.3px">View 1</div>
<svg class="abs" style="left:1761px;top:478px" width="26" height="30" viewBox="0 0 26 30"><path d="M9 1.500h8v2.500h8v3.500H1V4h8z" fill="#333"/><path d="M3.200 9.500h19.600v16.500a2.500 2.500 0 0 1-2.500 2.500H5.700a2.500 2.500 0 0 1-2.500-2.500z" fill="#333"/><path d="M8.300 12v13.500M13 12v13.500M17.700 12v13.500" stroke="#afd9e8" stroke-width="2.100"/></svg>
<div class="t" style="left:1672.500px;top:522.6px;font-size:15.5px;letter-spacing:.5px;color:#4a4a4a;-webkit-text-stroke:.2px #4a4a4a">Jul 10, 2020 12:14:45 PM al@x3dmedia.com</div>
<div class="t pt" style="left:1673px;top:561.3px;letter-spacing:.6px">View 2</div>
<div class="t" style="left:1672.500px;top:590.9px;font-size:15.5px;letter-spacing:.45px;color:#4a4a4a;-webkit-text-stroke:.2px #4a4a4a">Jul 10, 2020 12:15:14 PM al@x3dmedia.com</div>
<svg class="abs" style="left:1612px;top:648.500px" width="18" height="11" viewBox="0 0 18 11"><path d="M1 1.800H17L9 9.700Z" fill="#444"/></svg>
<div class="cb" style="left:1646.8px;top:636.3px"><svg width="33" height="33" viewBox="0 0 33 33" style="display:block"><path d="M4.500 19.200L12.800 25.800L28.500 7.800" fill="none" stroke="#fff" stroke-width="4.600"/></svg></div>
<svg class="abs" style="left:1698px;top:635px" width="35" height="35" viewBox="0 0 35 35" fill="none" stroke="#555" stroke-width="1.300"><rect x="1.200" y="1.200" width="16" height="15.800" rx="3"/><rect x="1.200" y="17" width="16" height="15.600" rx="3"/><rect x="17.200" y="17" width="16" height="15.600" rx="3"/></svg>
<div class="t pt" style="left:1739.500px;top:642.2px">carb assy _ flipped.step</div>
<div class="cb" style="left:1672.3px;top:688.8px"><svg width="33" height="33" viewBox="0 0 33 33" style="display:block"><path d="M4.500 19.200L12.800 25.800L28.500 7.800" fill="none" stroke="#fff" stroke-width="4.600"/></svg></div>
<svg class="abs" style="left:1722.5px;top:687.5px" width="38" height="35" viewBox="0 0 38 35" fill="none" stroke="#444" stroke-linejoin="round"><path d="M2.100 1.900H17.800L22.800 7V13.500H30.600L35.600 18.500V33.200H8.400L2.100 25.500Z" stroke-width="2.100"/><path d="M5.800 6L9.200 9.300H18.500M9.200 9.300V27.800M22.200 13.500V21H31.700" stroke-width="1.300"/></svg>
<div class="t pt" style="left:1764.500px;top:694.9px">carb bowl:1</div>
<div class="cb" style="left:1672.3px;top:743.7px"><svg width="33" height="33" viewBox="0 0 33 33" style="display:block"><path d="M4.500 19.200L12.800 25.800L28.500 7.800" fill="none" stroke="#fff" stroke-width="4.600"/></svg></div>
<svg class="abs" style="left:1722.5px;top:742.4px" width="38" height="35" viewBox="0 0 38 35" fill="none" stroke="#444" stroke-linejoin="round"><path d="M2.100 1.900H17.800L22.800 7V13.500H30.600L35.600 18.500V33.200H8.400L2.100 25.500Z" stroke-width="2.100"/><path d="M5.800 6L9.200 9.300H18.500M9.200 9.300V27.800M22.200 13.500V21H31.700" stroke-width="1.300"/></svg>
<div class="t pt" style="left:1764.500px;top:749.8px;letter-spacing:0.88px">2ba cheese hd screw:4</div>
<div class="cb" style="left:1672.3px;top:798.7px"><svg width="33" height="33" viewBox="0 0 33 33" style="display:block"><path d="M4.500 19.200L12.800 25.800L28.500 7.800" fill="none" stroke="#fff" stroke-width="4.600"/></svg></div>
<svg class="abs" style="left:1722.5px;top:797.4px" width="38" height="35" viewBox="0 0 38 35" fill="none" stroke="#444" stroke-linejoin="round"><path d="M2.100 1.900H17.800L22.800 7V13.500H30.600L35.600 18.500V33.200H8.400L2.100 25.500Z" stroke-width="2.100"/><path d="M5.800 6L9.200 9.300H18.500M9.200 9.300V27.800M22.200 13.500V21H31.700" stroke-width="1.300"/></svg>
<div class="t pt" style="left:1764.500px;top:804.8px;letter-spacing:0px">CARB-AIR FILTER ADAPTER:1</div>
<div class="cb" style="left:1672.3px;top:854.2px"><svg width="33" height="33" viewBox="0 0 33 33" style="display:block"><path d="M4.500 19.200L12.800 25.800L28.500 7.800" fill="none" stroke="#fff" stroke-width="4.600"/></svg></div>
<svg class="abs" style="left:1722.5px;top:852.9px" width="38" height="35" viewBox="0 0 38 35" fill="none" stroke="#444" stroke-linejoin="round"><path d="M2.100 1.900H17.800L22.800 7V13.500H30.600L35.600 18.500V33.200H8.400L2.100 25.500Z" stroke-width="2.100"/><path d="M5.800 6L9.200 9.300H18.500M9.200 9.300V27.800M22.200 13.500V21H31.700" stroke-width="1.300"/></svg>
<div class="t pt" style="left:1764.500px;top:860.3px">carb main body:1</div>
<svg class="abs" style="left:1641px;top:861.2px" width="12" height="20" viewBox="0 0 12 20"><path d="M1.500 1.500V18.500L10.200 10Z" fill="#444"/></svg>
<div class="cb off" style="left:1672.3px;top:909.8px"></div>
<svg class="abs" style="left:1722.5px;top:908.5px" width="38" height="35" viewBox="0 0 38 35" fill="none" stroke="#444" stroke-linejoin="round"><path d="M2.100 1.900H17.800L22.800 7V13.500H30.600L35.600 18.500V33.200H8.400L2.100 25.500Z" stroke-width="2.100"/><path d="M5.800 6L9.200 9.300H18.500M9.200 9.300V27.800M22.200 13.500V21H31.700" stroke-width="1.300"/></svg>
<div class="t pt" style="left:1764.500px;top:915.9px;letter-spacing:0.84px">carb bell mouth:1</div>
<div class="cb" style="left:1672.3px;top:964.9px"><svg width="33" height="33" viewBox="0 0 33 33" style="display:block"><path d="M4.500 19.200L12.800 25.800L28.500 7.800" fill="none" stroke="#fff" stroke-width="4.600"/></svg></div>
<svg class="abs" style="left:1722.5px;top:963.6px" width="38" height="35" viewBox="0 0 38 35" fill="none" stroke="#444" stroke-linejoin="round"><path d="M2.100 1.900H17.800L22.800 7V13.500H30.600L35.600 18.500V33.200H8.400L2.100 25.500Z" stroke-width="2.100"/><path d="M5.800 6L9.200 9.300H18.500M9.200 9.300V27.800M22.200 13.500V21H31.700" stroke-width="1.300"/></svg>
<div class="t pt" style="left:1764.500px;top:971.0px">carb slide:1</div>
<div class="cb" style="left:1672.3px;top:1019.9px"><svg width="33" height="33" viewBox="0 0 33 33" style="display:block"><path d="M4.500 19.200L12.800 25.800L28.500 7.800" fill="none" stroke="#fff" stroke-width="4.600"/></svg></div>
<svg class="abs" style="left:1722.5px;top:1018.6px" width="38" height="35" viewBox="0 0 38 35" fill="none" stroke="#444" stroke-linejoin="round"><path d="M2.100 1.900H17.800L22.800 7V13.500H30.600L35.600 18.500V33.200H8.400L2.100 25.500Z" stroke-width="2.100"/><path d="M5.800 6L9.200 9.300H18.500M9.200 9.300V27.800M22.200 13.500V21H31.700" stroke-width="1.300"/></svg>
<div class="t pt" style="left:1764.500px;top:1026.0px">carb nut:1</div>
<div class="cb" style="left:1672.3px;top:1074.7px"><svg width="33" height="33" viewBox="0 0 33 33" style="display:block"><path d="M4.500 19.200L12.800 25.800L28.500 7.800" fill="none" stroke="#fff" stroke-width="4.600"/></svg></div>
<svg class="abs" style="left:1722.5px;top:1073.4px" width="38" height="35" viewBox="0 0 38 35" fill="none" stroke="#444" stroke-linejoin="round"><path d="M2.100 1.900H17.800L22.800 7V13.500H30.600L35.600 18.500V33.200H8.400L2.100 25.500Z" stroke-width="2.100"/><path d="M5.800 6L9.200 9.300H18.500M9.200 9.300V27.800M22.200 13.500V21H31.700" stroke-width="1.300"/></svg>
<div class="t pt" style="left:1764.500px;top:1080.8px;letter-spacing:0px">CARB BANJO:1</div>
</div></div>
<!-- PANEL-END -->

<!-- home indicator -->
<div class="abs" style="left:753px;top:1408px;width:541px;height:10px;border-radius:5px;background:#000"></div>
</body>
</html>
